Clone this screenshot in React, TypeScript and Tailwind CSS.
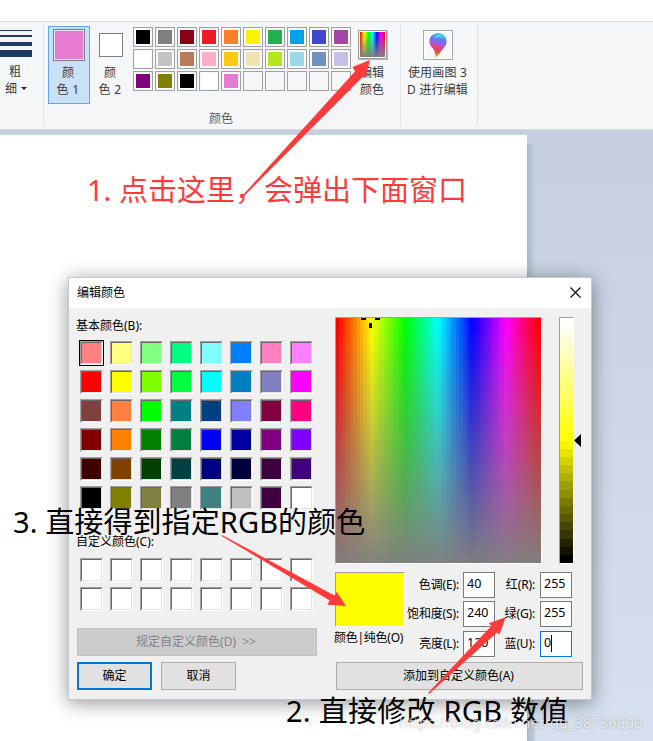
import type { ReactNode } from "react";
import clsx from "clsx";

const paletteColors = [
  "#000000", "#7f7f7f", "#880015", "#ed1c24", "#ff7f27", "#fff200", "#22b14c", "#00a2e8", "#3f48cc", "#a349a4",
  "#ffffff", "#c3c3c3", "#b97a57", "#ffaec9", "#ffc90e", "#efe4b0", "#b5e61d", "#99d9ea", "#7092be", "#c8bfe7",
  "#800080", "#808000", "#000000", "#ffffff", "#e97ad3", null, null, null, null, null,
];

const basicColors = [
  "#ff8080", "#ffff80", "#80ff80", "#00ff80", "#80ffff", "#0080ff", "#ff80c0", "#ff80ff",
  "#ff0000", "#ffff00", "#80ff00", "#00ff40", "#00ffff", "#0080c0", "#8080c0", "#ff00ff",
  "#804040", "#ff8040", "#00ff00", "#008080", "#004080", "#8080ff", "#800040", "#ff0080",
  "#800000", "#ff8000", "#008000", "#008040", "#0000ff", "#0000a0", "#800080", "#8000ff",
  "#400000", "#804000", "#004000", "#004040", "#000080", "#000040", "#400040", "#400080",
  "#000000", "#808000", "#808040", "#808080", "#408080", "#c0c0c0", "#400040", "#ffffff",
];

const customColors = Array.from({ length: 16 }, () => "#ffffff");

function Separator() {
  return <div className="mt-0.5 h-[102px] w-px bg-[#e2e3e4]" />;
}

function Ribbon() {
  return (
    <div className="flex h-[109px] border-y border-[#dadbdc] bg-[#f5f6f7] text-[#3b3b3b]">
      <div className="w-[43px] pt-2 text-center leading-[17px]">
        <div className="flex w-8 flex-col">
          <div className="h-px bg-[#1f3a5f]" />
          <div className="mt-1 h-0.5 bg-[#1f3a5f]" />
          <div className="mt-[5px] h-1 bg-[#1f3a5f]" />
          <div className="mt-1 h-[7px] bg-[#1f3a5f]" />
        </div>
        <div className="mt-[6px] w-[30px]">粗</div>
        <div className="flex items-center pl-[5px]">
          细
          <svg className="ml-[4px]" width="6" height="3" viewBox="0 0 6 3">
            <path d="M0 0h6L3 3z" fill="#222" />
          </svg>
        </div>
      </div>
      <Separator />

      <div className="w-[356px]">
        <div className="flex pl-1 pt-1">
          <div className="flex h-[78px] w-[42px] flex-col items-center border border-[#64a5e7] bg-[#c9e0f7] pt-0.5 leading-[17px]">
            <div className="h-8 w-8 border border-[#808080] bg-[#e97ad3] shadow-[inset_0_0_0_1px_#dcebfa]" />
            <div className="mt-[3px] pr-0.5">颜</div>
            <div className="whitespace-pre pr-0.5 tracking-[0.3px]">色 1</div>
          </div>
          <div className="flex w-[42px] flex-col items-center pt-[7px] leading-[17px]">
            <div className="h-6 w-6 border border-[#808080] bg-white" />
            <div className="mt-[7px] pr-0.5">颜</div>
            <div className="whitespace-pre pr-0.5 tracking-[0.3px]">色 2</div>
          </div>
          <div className="ml-px mt-px grid h-16 grid-cols-[repeat(10,20px)] grid-rows-[repeat(3,20px)] gap-0.5">
            {paletteColors.map((color, i) => (
              <div key={i} className="border border-[#a0a0a0] p-px">
                {color && <div className="h-full border border-white" style={{ backgroundColor: color }} />}
              </div>
            ))}
          </div>
          <div className="flex w-[42px] flex-col items-center pt-1 leading-[17px]">
            <div className="h-[29px] w-[29px] border border-[#999] bg-white p-px shadow-[1px_1px_1px_#bbb]">
              <div className="h-full bg-[linear-gradient(to_bottom,transparent_10%,#808080),linear-gradient(to_right,#f00,#ff0,#0f0,#0ff,#00f,#f0f,#f00)]" />
            </div>
            <div className="mt-[5px]">编辑</div>
            <div>颜色</div>
          </div>
        </div>
        <div className="mt-[6px] pr-0.5 text-center leading-[17px] text-[#5a5a5a]">颜色</div>
      </div>
      <Separator />

      <div className="flex w-[76px] flex-col items-center pt-2 leading-[17px]">
        <div className="mr-[3px] flex h-[30px] w-[30px] items-center justify-center border border-[#a8a8a8] bg-[#f7f7f7] shadow-[inset_0_0_0_1px_white]">
          <svg width="20" height="26" viewBox="0 0 20 26">
            <defs>
              <linearGradient id="drop" x1="0.6" y1="0" x2="0.4" y2="1">
                <stop offset="0" stopColor="#35d6f2" />
                <stop offset="0.25" stopColor="#5a7df0" />
                <stop offset="0.44" stopColor="#9a5ce6" />
                <stop offset="0.6" stopColor="#e4407c" />
                <stop offset="0.8" stopColor="#f0503c" />
                <stop offset="1" stopColor="#f8b820" />
              </linearGradient>
            </defs>
            <path d="M10 1C5 1 1.400 4.800 1.400 9.500c0 4.500 4.300 6.500 5.400 10.500.6 2.300.2 4.600 1 5.200 1.200.4 3.200-3.700 5.700-6.700 2.700-3.100 5.100-5 5.100-9C18.600 4.800 15 1 10 1z" fill="url(#drop)" />
            <path d="M6 7c.5-2.800 3-4.300 5.500-4 2 .2 3.300 1.500 3.800 3-2-1-5-1.500-9.300 1z" fill="#55e4f5" opacity=".7" />
          </svg>
        </div>
        <div className="mt-1 whitespace-pre pr-[3px] tracking-[0.2px]">使用画图 3</div>
        <div className="whitespace-pre pr-[3px] tracking-[0.2px]">D 进行编辑</div>
      </div>
      <Separator />
    </div>
  );
}

function SwatchGrid({ colors, selected }: { colors: string[]; selected?: number }) {
  return (
    <div className="ml-[11px] grid auto-rows-[24px] grid-cols-[repeat(8,23px)] gap-x-[7px] gap-y-[5px]">
      {colors.map((color, i) => (
        <div
          key={i}
          className={clsx(
            "border border-b-white border-l-[#a0a0a0] border-r-white border-t-[#a0a0a0]",
            i === selected && "outline outline-1 outline-black",
          )}
        >
          <div
            className="h-full border border-b-[#e3e3e3] border-l-[#696969] border-r-[#e3e3e3] border-t-[#696969]"
            style={{ backgroundColor: color }}
          />
        </div>
      ))}
    </div>
  );
}

const hueColumns = Array.from({ length: 60 }, (_, i) => `hsl(${(i / 59) * 360} 100% 50%)`);
const grayRows = Array.from({ length: 30 }, (_, i) => `rgb(128 128 128 / ${i / 30})`);
const lumRows = Array.from({ length: 30 }, (_, i) => `hsl(60 100% ${100 - (i / 29) * 100}%)`);

function Spectrum() {
  return (
    <div className="relative h-[247px] w-[207px] border border-b-white border-l-[#a0a0a0] border-r-white border-t-[#a0a0a0]">
      <div className="flex h-full">
        {hueColumns.map((color, i) => (
          <div key={i} className="flex-1" style={{ backgroundColor: color }} />
        ))}
      </div>
      <div className="absolute inset-0 flex flex-col">
        {grayRows.map((color, i) => (
          <div key={i} className="flex-1" style={{ backgroundColor: color }} />
        ))}
      </div>
      {/* crosshair, clipped by the top edge */}
      <div className="absolute left-[25px] top-0 h-0.5 w-[5px] bg-black" />
      <div className="absolute left-[39px] top-0 h-0.5 w-[5px] bg-black" />
      <div className="absolute left-[33px] top-[5px] h-[5px] w-[3px] bg-black" />
    </div>
  );
}

function Luminosity() {
  return (
    <div className="ml-[17px] flex h-[247px]">
      <div className="flex w-[15px] flex-col border border-b-white border-l-[#a0a0a0] border-r-white border-t-[#a0a0a0]">
        {lumRows.map((color, i) => (
          <div key={i} className="flex-1" style={{ backgroundColor: color }} />
        ))}
      </div>
      <svg className="mt-[117px]" width="7" height="13" viewBox="0 0 7 13">
        <path d="M7 0v13L0 6.500z" fill="#000" />
      </svg>
    </div>
  );
}

function Field({ label, value, focused, wide }: { label: string; value: string; focused?: boolean; wide?: boolean }) {
  return (
    <div className="flex h-[26px] items-center">
      <div
        className={clsx(
          "flex justify-end whitespace-nowrap tracking-[-0.15px]",
          wide ? "w-[56px] pr-1" : "w-[45px] pr-[5px]",
        )}
      >
        {label}
      </div>
      <div
        className={clsx(
          "flex h-[26px] w-8 items-center border bg-white pb-0.5 pl-[3px] text-[12.5px]",
          focused ? "border-[#0078d7]" : "border-[#7a7a7a]",
        )}
      >
        {value}
        {focused && <span className="h-[17px] w-px bg-black" />}
      </div>
    </div>
  );
}

function Button({ className, children }: { className: string; children: ReactNode }) {
  return <button className={clsx("flex h-7 items-center justify-center whitespace-pre", className)}>{children}</button>;
}

function ColorDialog() {
  return (
    <div className="absolute left-[68px] top-[277px] h-[423px] w-[524px] border border-[#c3c9d0] bg-[#f0f0f0] text-black shadow-[0_3px_18px_rgba(0,0,0,0.42)]">
      <div className="flex h-[30px] items-center justify-between bg-white pb-0.5 pl-2 pr-[10px]">
        <span className="pt-0.5">编辑颜色</span>
        <svg width="11" height="11" viewBox="0 0 11 11">
          <path d="M.5.5l10 10M10.500.5l-10 10" stroke="#000" strokeWidth="1.100" />
        </svg>
      </div>

      <div className="flex">
        <div className="w-[266px]">
          <div className="h-[33px] pl-[7px] leading-[36px]">基本颜色(B):</div>
          <SwatchGrid colors={basicColors} selected={0} />
          <div className="h-12 pl-[7px] pt-[23px] leading-[18px]">自定义颜色(C):</div>
          <SwatchGrid colors={customColors} />
          <div className="ml-2 mt-[17px]">
            <Button className="w-[240px] border border-[#bfbfbf] bg-[#cccccc] pr-0.5 text-[#838383]">规定自定义颜色(D)  &gt;&gt;</Button>
            <div className="mt-1.5 flex gap-[9px]">
              <Button className="w-[75px] border-2 border-[#0078d7] bg-[#e1e1e1]">确定</Button>
              <Button className="w-[75px] border border-[#adadad] bg-[#e1e1e1]">取消</Button>
            </div>
          </div>
        </div>

        <div className="pt-[9px]">
          <div className="flex">
            <Spectrum />
            <Luminosity />
          </div>
          <div className="mt-2 flex">
            <div className="w-[70px]">
              <div className="h-[55px] border border-b-white border-l-[#a0a0a0] border-r-white border-t-[#a0a0a0] bg-[#ffff00]" />
              <div className="-ml-px whitespace-nowrap leading-[22px] tracking-[-0.25px]">颜色|纯色(O)</div>
            </div>
            <div className="ml-0.5 flex h-[85px] flex-col">
              <div className="flex">
                <Field label="色调(E):" value="40" wide />
                <Field label="红(R):" value="255" />
              </div>
              <div className="mt-[3px] flex">
                <Field label="饱和度(S):" value="240" wide />
                <Field label="绿(G):" value="255" />
              </div>
              <div className="mt-1 flex">
                <Field label="亮度(L):" value="120" wide />
                <Field label="蓝(U):" value="0" focused />
              </div>
            </div>
          </div>
          <Button className="ml-px mt-[5px] w-[247px] border border-[#adadad] bg-[#e1e1e1] pr-0.5">添加到自定义颜色(A)</Button>
        </div>
      </div>
    </div>
  );
}

function Annotations() {
  return (
    <>
      <svg className="absolute left-0 top-0" width="653" height="741" viewBox="0 0 653 741" fill="#fe3b3a">
        <path d="M242.500 195.500L355 71.500 352.500 67 370 60 365.500 77 362 77.500 243.500 196.500z" />
        <path d="M222 535L334.500 595.500 336.700 592 346 606 327.300 604.700 329.700 600.500 221.500 536z" />
        <path d="M428 693L491.300 626 488.700 623.300 505.700 617.300 499.300 634.700 497 632.500 429 694z" />
      </svg>
      <div className="absolute left-[87px] top-[170px] whitespace-pre text-[29px] leading-10 text-[#fe3b3a]">
        1. 点击这里，会弹出下面窗口
      </div>
      <div className="absolute left-[13px] top-[502px] whitespace-pre text-[29px] leading-10 tracking-[0.1px] text-black">
        3. 直接得到指定RGB的颜色
      </div>
      <div className="absolute left-[286px] top-[691px] whitespace-pre text-[29px] leading-10 tracking-[0.26px] text-black">
        2. 直接修改 RGB 数值
      </div>
      <div className="absolute left-[399px] top-[710px] whitespace-nowrap text-[14.8px] leading-6 text-white/70 [text-shadow:0_0_2px_rgba(0,0,0,0.3)]">
        https://blog.csdn.net/qq_38736000
      </div>
    </>
  );
}

export default function App() {
  return (
    <div className="relative h-[741px] w-[653px] overflow-hidden bg-white pt-[21px] font-['Noto_Sans','Noto_Sans_CJK_SC',sans-serif] text-[12px]">
      <Ribbon />
      <div className="flex h-[611px] bg-linear-to-b from-[#c5cfdf] to-[#d6e0ee] pt-[5px]">
        <div className="w-[527px] bg-white" />
        <div className="mt-[9px] w-2 bg-linear-to-r from-[#abb7c8] to-[#c3cddd]" />
      </div>
      <ColorDialog />
      <Annotations />
    </div>
  );
}
